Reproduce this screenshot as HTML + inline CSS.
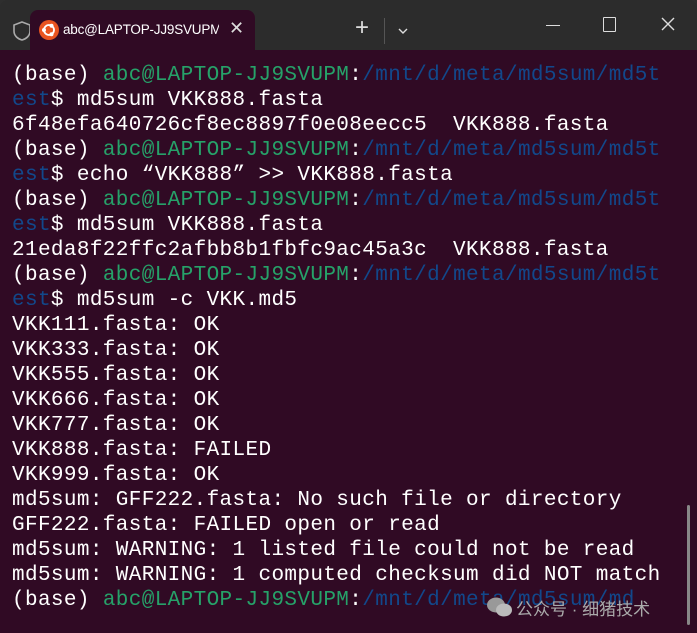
<!DOCTYPE html>
<html><head><meta charset="utf-8"><style>
body{margin:0;width:697px;height:633px;overflow:hidden;background:#2e2e2e;font-family:"Liberation Sans",sans-serif;}
.win{position:absolute;left:0;top:0;width:697px;height:633px;background:#2c2c2c;border-radius:8px 8px 0 0;overflow:hidden}
.tab{position:absolute;left:30px;top:10px;width:225px;height:41px;background:#300a24;border-radius:8px 8px 0 0}
.term{position:absolute;left:0;top:50px;width:697px;height:583px;background:#300a24}
.t{position:absolute;left:12px;top:13px;font-family:"Liberation Mono",monospace;font-size:21px;letter-spacing:0.37px;line-height:25px;color:#fff;white-space:pre}
.g{color:#26a269}.b{color:#12488b}
.wm{position:absolute;left:516px;top:595px;color:#aaa;font-family:"Liberation Sans","Noto Sans CJK SC",sans-serif;font-size:17px;white-space:nowrap}
</style></head><body><div class="win">
<svg style="position:absolute;left:11px;top:20px" width="22" height="22" viewBox="0 0 22 22"><path d="M11 2 L19 5 V11 C19 16 15 19 11 20 C7 19 3 16 3 11 V5 Z" fill="none" stroke="#aaa" stroke-width="1.6"/></svg>
<div class="tab">
<svg style="position:absolute;left:9px;top:10px" width="20" height="20" viewBox="0 0 20 20"><circle cx="10" cy="10" r="10" fill="#e95420"/><circle cx="10" cy="10" r="5" fill="none" stroke="#fff" stroke-width="1.8"/><circle cx="5" cy="10" r="2" fill="#fff"/><circle cx="12.5" cy="5.7" r="2" fill="#fff"/><circle cx="12.5" cy="14.3" r="2" fill="#fff"/></svg>
<div style="position:absolute;left:33px;top:12px;color:#fff;font-size:13.5px;letter-spacing:-0.2px;white-space:nowrap;width:156px;overflow:hidden">abc@LAPTOP-JJ9SVUPM: /mr</div>
<div style="position:absolute;left:199px;top:8px;color:#ddd;font-size:18px">✕</div>
</div>
<div style="position:absolute;left:355px;top:14px;color:#ddd;font-size:24px;font-weight:300">+</div>
<div style="position:absolute;left:384px;top:18px;width:1px;height:26px;background:#555"></div>
<svg style="position:absolute;left:397px;top:27px" width="12" height="8"><path d="M2 2 L6 6 L10 2" fill="none" stroke="#ddd" stroke-width="1.4"/></svg>
<div style="position:absolute;left:546px;top:25px;width:14px;height:1.4px;background:#ddd"></div>
<div style="position:absolute;left:603px;top:17px;width:11px;height:13px;border:1.4px solid #ddd;border-radius:1px"></div>
<svg style="position:absolute;left:661px;top:17px" width="14" height="14"><path d="M1 1 L13 13 M13 1 L1 13" stroke="#ddd" stroke-width="1.4"/></svg>
<div class="term"><div class="t">(base) <span class="g">abc@LAPTOP-JJ9SVUPM</span>:<span class="b">/mnt/d/meta/md5sum/md5t</span>
<span class="b">est</span>$ md5sum VKK888.fasta
6f48efa640726cf8ec8897f0e08eecc5  VKK888.fasta
(base) <span class="g">abc@LAPTOP-JJ9SVUPM</span>:<span class="b">/mnt/d/meta/md5sum/md5t</span>
<span class="b">est</span>$ echo “VKK888” >> VKK888.fasta
(base) <span class="g">abc@LAPTOP-JJ9SVUPM</span>:<span class="b">/mnt/d/meta/md5sum/md5t</span>
<span class="b">est</span>$ md5sum VKK888.fasta
21eda8f22ffc2afbb8b1fbfc9ac45a3c  VKK888.fasta
(base) <span class="g">abc@LAPTOP-JJ9SVUPM</span>:<span class="b">/mnt/d/meta/md5sum/md5t</span>
<span class="b">est</span>$ md5sum -c VKK.md5
VKK111.fasta: OK
VKK333.fasta: OK
VKK555.fasta: OK
VKK666.fasta: OK
VKK777.fasta: OK
VKK888.fasta: FAILED
VKK999.fasta: OK
md5sum: GFF222.fasta: No such file or directory
GFF222.fasta: FAILED open or read
md5sum: WARNING: 1 listed file could not be read
md5sum: WARNING: 1 computed checksum did NOT match
(base) <span class="g">abc@LAPTOP-JJ9SVUPM</span>:<span class="b">/mnt/d/meta/md5sum/md</span></div>
<div style="position:absolute;left:687px;top:455px;width:3px;height:120px;background:#888;border-radius:2px"></div>
</div>
<svg style="position:absolute;left:485px;top:595px" width="30" height="24"><ellipse cx="11" cy="10" rx="9" ry="7.5" fill="#999"/><ellipse cx="19" cy="15" rx="8" ry="6.5" fill="#bbb"/></svg>
<div class="wm">公众号 · 细猪技术</div>
</div></body></html>
